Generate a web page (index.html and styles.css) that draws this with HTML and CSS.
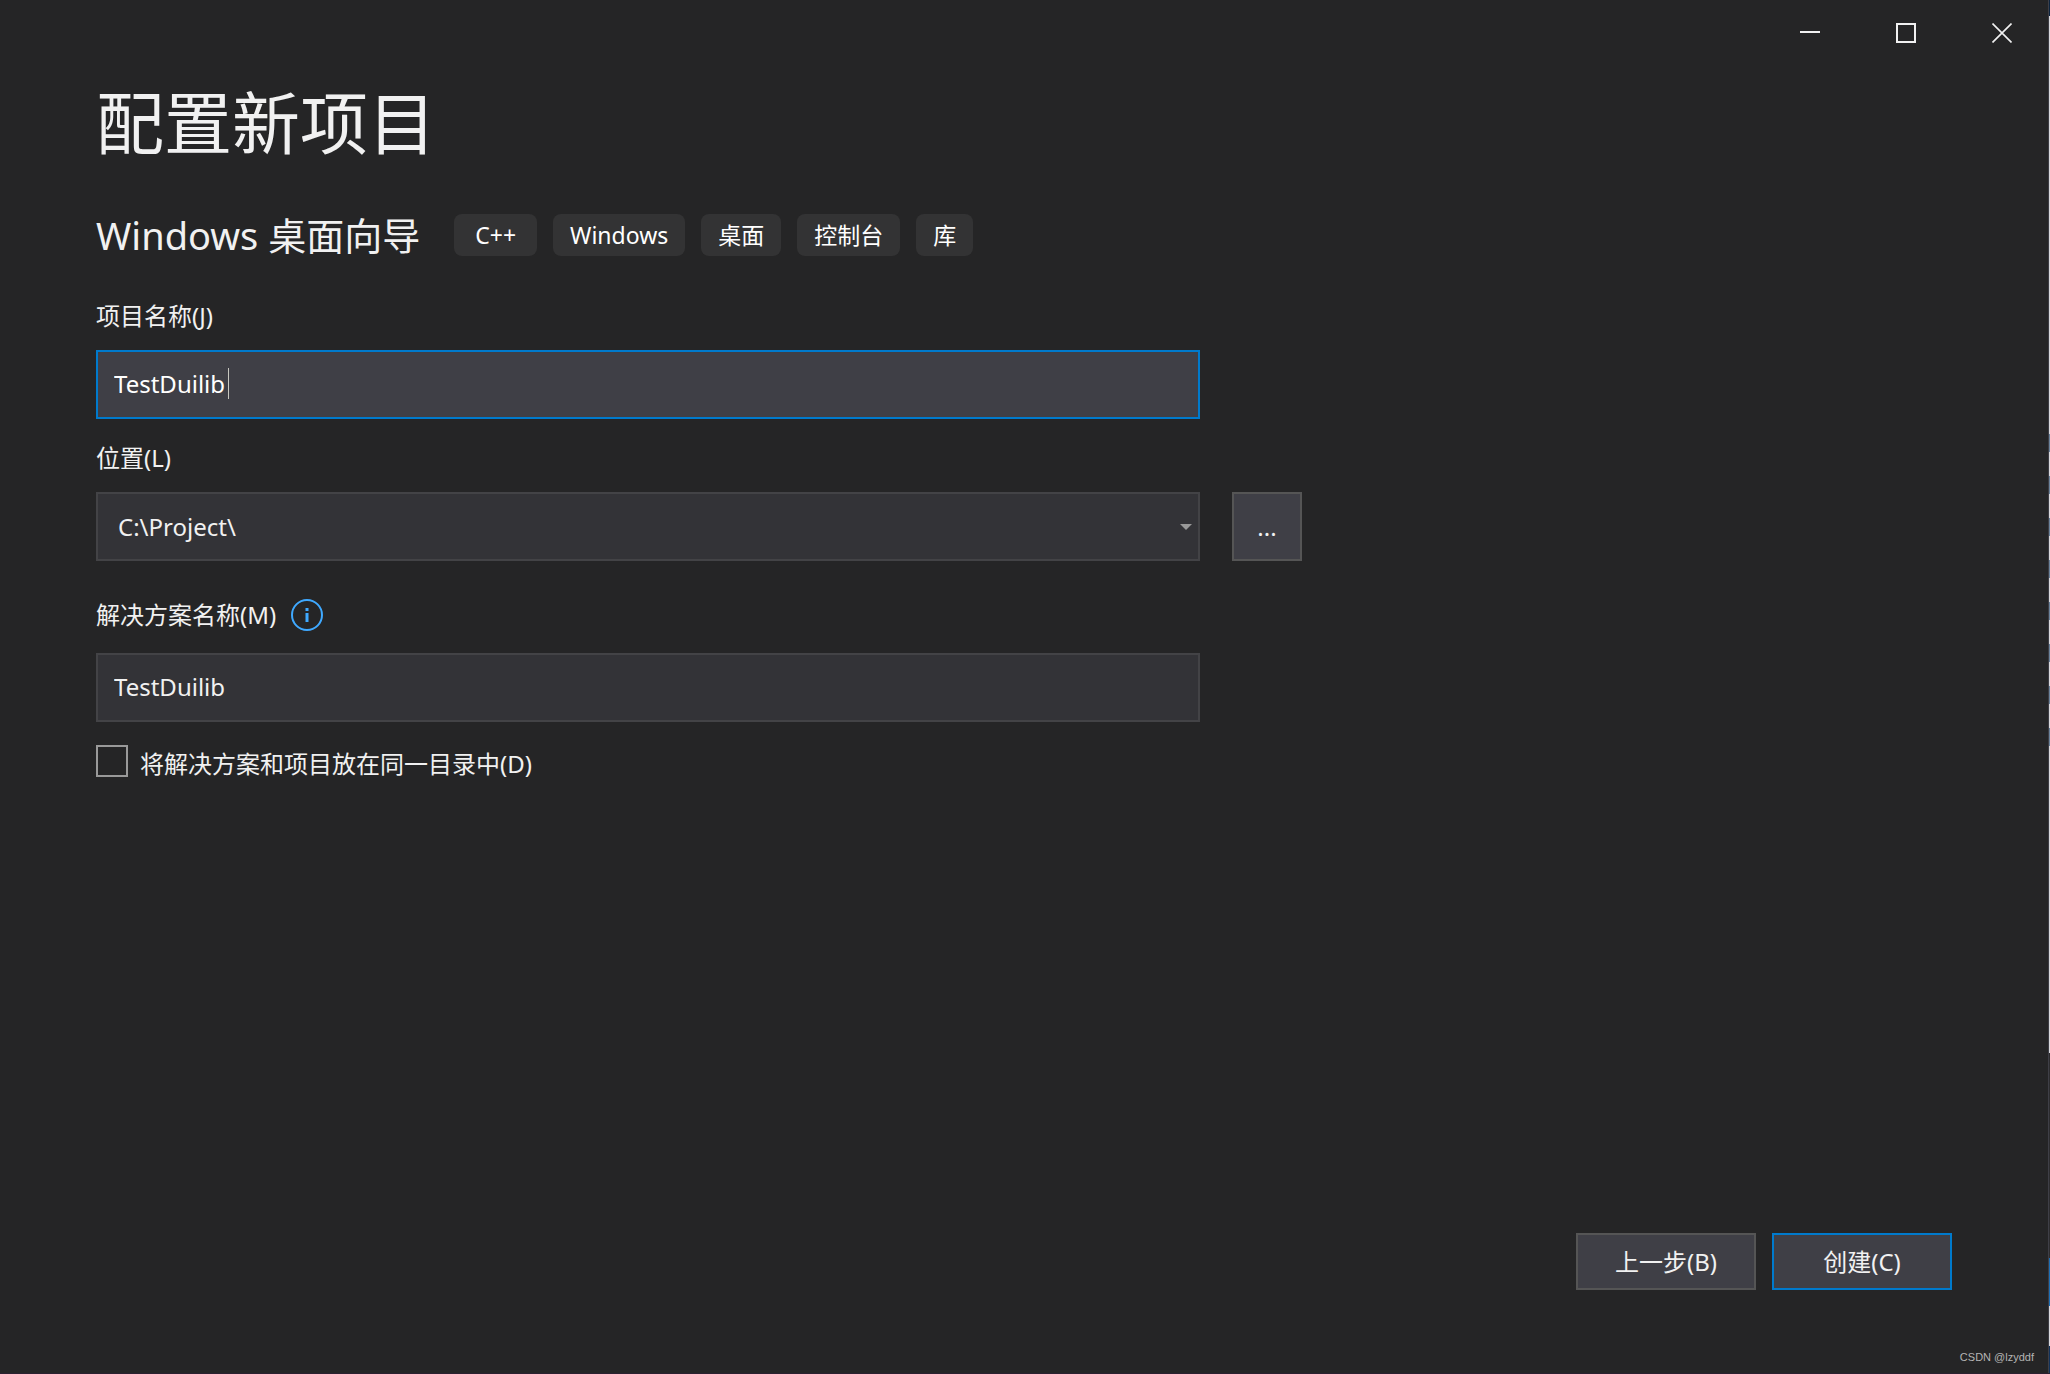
FILE: index.html
```html
<!DOCTYPE html>
<html lang="zh-CN">
<head>
  <meta charset="UTF-8">
  <meta name="viewport" content="width=device-width, initial-scale=1.0">
  <title>配置新项目</title>
  <link rel="stylesheet" href="styles.css">
</head>
<body>
  <div class="window">
    <header class="title-bar">
      <button type="button" aria-label="最小化">
        <svg width="20" height="20" viewBox="0 0 20 20"><path d="M0 9h20" stroke="#f1f1f1" stroke-width="2"/></svg>
      </button>
      <button type="button" aria-label="最大化">
        <svg width="20" height="20" viewBox="0 0 20 20"><rect x="1" y="1" width="18" height="18" fill="none" stroke="#f1f1f1" stroke-width="2"/></svg>
      </button>
      <button type="button" aria-label="关闭">
        <svg width="20" height="20" viewBox="0 0 20 20"><path d="M0.500 0.500l19 19M19.500 0.500l-19 19" stroke="#f1f1f1" stroke-width="1.600"/></svg>
      </button>
    </header>

    <main class="content">
      <h1>配置新项目</h1>

      <div class="template">
        <h2>Windows 桌面向导</h2>
        <ul class="tags">
          <li class="language">C++</li>
          <li>Windows</li>
          <li>桌面</li>
          <li>控制台</li>
          <li>库</li>
        </ul>
      </div>

      <form class="project-form" id="projectForm">
        <div class="field">
          <label for="projectName">项目名称(J)</label>
          <div class="field-row">
            <input type="text" id="projectName" class="text-box" value="TestDuilib" autofocus>
            <span class="caret"></span>
          </div>
        </div>

        <div class="field">
          <label for="location">位置(L)</label>
          <div class="field-row">
            <div class="combo">
              <select id="location" class="text-box">
                <option>C:\Project\</option>
              </select>
              <svg class="combo-arrow" width="12" height="6" viewBox="0 0 12 6"><path d="M0 0h12l-6 6z" fill="#999"/></svg>
            </div>
            <button type="button" class="btn browse">...</button>
          </div>
        </div>

        <div class="field solution">
          <div class="label-row">
            <label for="solutionName">解决方案名称(M)</label>
            <svg width="32" height="32" viewBox="0 0 32 32">
              <circle cx="16" cy="16" r="15" fill="none" stroke="#3fa9ff" stroke-width="2"/>
              <path d="M14.500 9h3v3h-3zM14.500 14h3v9h-3z" fill="#3fa9ff"/>
            </svg>
          </div>
          <div class="field-row">
            <input type="text" id="solutionName" class="text-box" value="TestDuilib">
          </div>
        </div>

        <div class="check">
          <input type="checkbox" id="sameDir">
          <label for="sameDir">将解决方案和项目放在同一目录中(D)</label>
        </div>
      </form>
    </main>

    <footer class="actions">
      <button type="button" class="btn">上一步(B)</button>
      <button type="submit" form="projectForm" class="btn primary">创建(C)</button>
    </footer>

    <div class="watermark">CSDN @lzyddf</div>
    <div class="edge"></div>
  </div>
</body>
</html>
```

FILE: styles.css
```css
* {
  box-sizing: border-box;
}

body {
  margin: 0;
  background: #252526;
  color: #f1f1f1;
  font-family: "Noto Sans", "Noto Sans CJK SC", sans-serif;
  font-size: 24px;
  line-height: 32px;
}

button,
input,
select {
  font: inherit;
  color: inherit;
}

.window {
  display: flex;
  flex-direction: column;
  min-height: 100vh;
  position: relative;
  border-bottom: 1px solid #2b2030;
}

.title-bar {
  display: flex;
  justify-content: flex-end;
}

.title-bar button {
  display: flex;
  align-items: center;
  justify-content: center;
  width: 96px;
  height: 66px;
  padding: 0;
  border: none;
  background: none;
}

.content {
  flex: 1;
  padding: 9px 96px 0;
}

h1 {
  margin: 0;
  font-size: 68px;
  font-weight: 400;
  line-height: 96px;
}

.template {
  display: flex;
  align-items: center;
  gap: 34px;
  margin-top: 36px;
}

h2 {
  margin: 0;
  font-size: 38px;
  font-weight: 400;
  line-height: 56px;
}

.tags {
  display: flex;
  gap: 16px;
  margin: 0;
  padding: 0;
  list-style: none;
  font-size: 23px;
}

.tags li {
  padding: 5px 17px;
  border-radius: 8px;
  background: #333334;
  color: #fff;
}

.tags .language {
  padding: 5px 21px;
}

.project-form {
  display: flex;
  flex-direction: column;
  margin-top: 37px;
}

.field {
  display: flex;
  flex-direction: column;
  gap: 18px;
  margin-bottom: 23px;
}

.field-row {
  display: flex;
  gap: 32px;
  position: relative;
}

.text-box,
.combo {
  width: 1104px;
}

.text-box {
  height: 69px;
  padding: 0 16px 2px;
  border: 2px solid #434346;
  border-radius: 0;
  outline: none;
  background: #333337;
  caret-color: transparent;
  appearance: none;
}

.text-box:focus {
  border-color: #007acc;
  background: #3f3f46;
  color: #fff;
}

.caret {
  position: absolute;
  top: 18px;
  left: 132px;
  width: 1px;
  height: 31px;
  background: #c8c8c0;
}

.combo {
  position: relative;
}

.combo .text-box {
  padding: 0 20px;
}

.combo-arrow {
  position: absolute;
  top: 32px;
  right: 8px;
}

.btn {
  width: 180px;
  height: 57px;
  padding: 0;
  border: 2px solid #555;
  background: #3f3f46;
}

.btn.primary {
  border-color: #007acc;
}

.btn.browse {
  width: 70px;
  height: 69px;
}

.solution {
  gap: 22px;
  margin-top: 15px;
}

.label-row {
  display: flex;
  align-items: center;
  gap: 15px;
}

.check {
  display: flex;
  align-items: flex-start;
  gap: 12px;
}

.check label {
  padding-top: 3px;
}

.check input {
  width: 32px;
  height: 32px;
  margin: 0;
  border: 2px solid #999;
  appearance: none;
}

.actions {
  display: flex;
  justify-content: flex-end;
  gap: 16px;
  padding: 0 98px 83px;
}

.watermark {
  position: absolute;
  right: 16px;
  bottom: 8px;
  color: #b4b4b4;
  font-family: "Liberation Sans", sans-serif;
  font-size: 11px;
  line-height: 16px;
}

/* sliver of the windows behind, along the right border */
.edge {
  position: absolute;
  top: 0;
  right: 0;
  bottom: 0;
  width: 2px;
  border-left: 1px solid #3f3f46;
  background:
    repeating-linear-gradient(#6b839b 0 18px, #d8d8dc 18px 42px) 0 434px / 1px 312px no-repeat,
    linear-gradient(#0d2540 16px, #d8d8dc 16px 1053px, #2d2d30 1053px 1258px, #1c6fb5 1258px 1306px, #d8d8dc 1306px 1346px, #12335c 1346px);
}
```
